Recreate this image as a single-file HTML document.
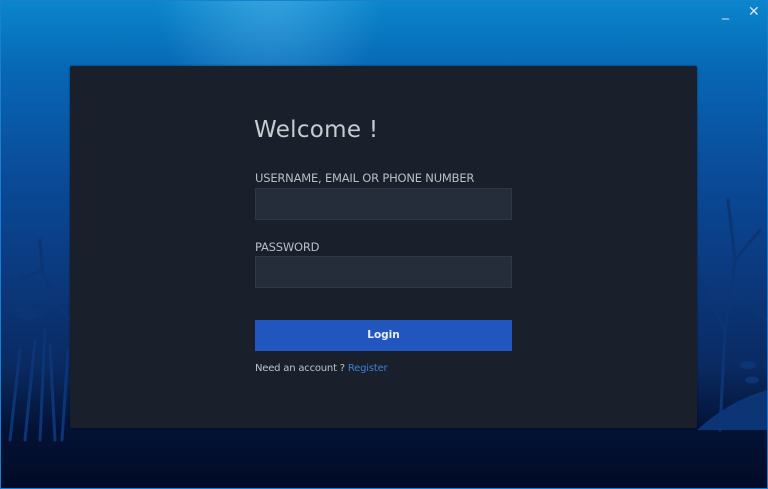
<!DOCTYPE html>
<html><head><style>
*{margin:0;padding:0;box-sizing:border-box}
body{width:768px;height:489px;overflow:hidden;position:relative;font-family:"DejaVu Sans","Liberation Sans",sans-serif;
background:linear-gradient(180deg,#0a86cc 0%,#0766b4 15%,#0a4c9a 35%,#0b3a80 55%,#0a2a62 75%,#031235 88%,#020b26 100%)}
.frame{position:absolute;left:0;top:0;width:768px;height:489px;border:1px solid #1a7fd0}
.rays{position:absolute;left:150px;top:-40px;width:240px;height:180px;background:radial-gradient(ellipse at 50% 0%,rgba(120,210,255,.45),rgba(60,160,230,0) 70%)}
.panel{position:absolute;left:70px;top:66px;width:627px;height:362px;background:#19202b;border-radius:2px;box-shadow:0 0 2px rgba(0,0,0,.5)}
h1{position:absolute;left:254px;top:117px;font-weight:normal;font-size:23px;color:#c8ccd2;letter-spacing:.3px}
.lbl{position:absolute;left:255px;font-size:11.5px;color:#b8bec6;letter-spacing:-.2px}
.inp{position:absolute;left:255px;width:257px;height:32px;background:#252d3a;border:1px solid #2f3846}
.btn{position:absolute;left:255px;top:320px;width:257px;height:31px;background:#2156bf;color:#e8eef8;font-weight:bold;font-size:10.5px;text-align:center;line-height:31px}
.na{position:absolute;left:255px;top:363px;font-size:10px;color:#c0c4ca;letter-spacing:-.2px}
.na span{color:#3d7fd8}
.ctl{position:absolute;color:#d8e4f0;font-size:14px}
</style></head><body>
<div class="rays"></div>
<svg style="position:absolute;left:0;top:0" width="768" height="489">
<g fill="none" stroke="#0c3576" stroke-width="3" stroke-linecap="round">
<path d="M40 240 L42 270 L20 280 M42 270 L55 300 L70 320"/>
<path d="M10 440 L20 350 M25 440 L35 340 M40 440 L45 330 M55 440 L50 345 M62 440 L68 350"/>
<path d="M720 430 L725 330 L735 260 L728 200 M735 260 L760 230 M725 330 L700 280 M740 300 L768 320"/>
</g>
<g fill="#0c3576">
<ellipse cx="28" cy="313" rx="14" ry="7"/>
<ellipse cx="748" cy="365" rx="8" ry="4"/><ellipse cx="752" cy="380" rx="7" ry="3.5"/>
<path d="M697 430 Q730 400 768 390 L768 430Z"/>
</g>
</svg>
<div class="ctl" style="left:722px;top:4px">_</div>
<div class="ctl" style="left:748px;top:4px">✕</div>
<div class="panel"></div>
<h1>Welcome !</h1>
<div class="lbl" style="top:171px">USERNAME, EMAIL OR PHONE NUMBER</div>
<div class="inp" style="top:188px"></div>
<div class="lbl" style="top:240px">PASSWORD</div>
<div class="inp" style="top:256px"></div>
<div class="btn">Login</div>
<div class="na">Need an account ? <span>Register</span></div>
<div class="frame"></div>
</body></html>
